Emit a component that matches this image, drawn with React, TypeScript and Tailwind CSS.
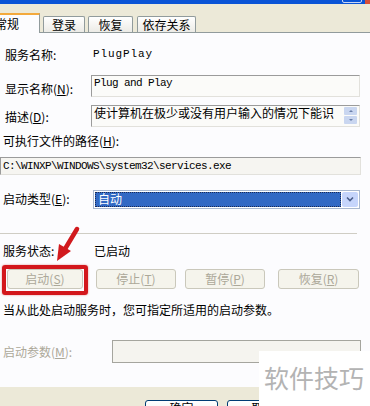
import React from "react";

const cjk = { fontFamily: '"Noto Sans CJK SC", "Noto Sans", sans-serif' };
const mono = { fontFamily: '"Liberation Mono", "DejaVu Sans Mono", monospace' };

function Tab({ label, active }: { label: string; active?: boolean }) {
  if (active) {
    return (
      <div className="relative -ml-[10px] flex h-[20px] w-[50px] items-center bg-[#fcfcfe] pl-[5px] text-[12px] text-black border-t-[2px] border-[#f3a93c] border-r border-r-[#919b9c] z-10 -mb-px">
        <span className="leading-none">{label}</span>
      </div>
    );
  }
  return (
    <div className="flex h-[16px] items-center justify-center border border-b-0 border-[#919b9c] bg-gradient-to-b from-[#ffffff] to-[#ecebe6] px-[5px] text-[12px] leading-none text-black rounded-t-[2px]">
      {label}
    </div>
  );
}

function DisabledBtn({ children, w }: { children: React.ReactNode; w: string }) {
  return (
    <div className={`flex h-[20px] ${w} items-center justify-center rounded-[3px] border border-[#cac8bb] bg-[#f5f4ec] text-[12px] text-[#aca899]`}>
      {children}
    </div>
  );
}

function U({ c }: { c: string }) {
  return <span className="underline underline-offset-1">{c}</span>;
}

export default function App() {
  return (
    <div className="relative h-[406px] w-[370px] overflow-hidden bg-[#ece9d8]" style={cjk}>
      {/* title bar strip */}
      <div className="relative h-[4px] bg-[#0a54d6]">
        <div className="absolute left-[342px] top-[-3px] h-[6px] w-[20px] rounded-[2px] border border-[#c9d6f5]" />
        <div className="absolute left-[365px] top-0 h-[4px] w-[5px] bg-[#d7503a]" />
      </div>
      {/* tabs */}
      <div className="flex h-[28px] items-end gap-[3px]">
        <Tab label="常规" active />
        <div className="flex items-end gap-[3px]">
          <div className="w-[42px]"><div className="flex h-[16px] items-center justify-center border border-b-0 border-[#919b9c] bg-gradient-to-b from-[#ffffff] to-[#ecebe6] text-[12px] leading-none rounded-t-[2px]">登录</div></div>
          <div className="w-[45px]"><div className="flex h-[16px] items-center justify-center border border-b-0 border-[#919b9c] bg-gradient-to-b from-[#ffffff] to-[#ecebe6] text-[12px] leading-none rounded-t-[2px]">恢复</div></div>
          <div className="w-[59px] ml-[1px]"><div className="flex h-[16px] items-center justify-center border border-b-0 border-[#919b9c] bg-gradient-to-b from-[#ffffff] to-[#ecebe6] text-[12px] leading-none rounded-t-[2px]">依存关系</div></div>
        </div>
      </div>
      {/* panel */}
      <div className="flex h-[355px] flex-col border-t border-[#919b9c] bg-[#fcfcfe] pt-[12px] text-[12px] text-black">
        {/* 服务名称 */}
        <div className="flex h-[19px] items-center">
          <div className="w-[93px] pl-[5px]">服务名称:</div>
          <div className="text-[11px] tracking-[0.9px]" style={mono}>PlugPlay</div>
        </div>
        {/* 显示名称 */}
        <div className="mt-[11px] flex h-[22px] items-start">
          <div className="w-[91px] pl-[5px] pt-[5px]">显示名称(<U c="N" />):</div>
          <div className="h-[22px] w-[269px] border border-t-[#9b9b9b] border-l-[#9b9b9b] border-r-[#e2e1dc] border-b-[#e2e1dc] bg-[#fbfbf9] pl-[2px] pt-[1px] text-[11px] leading-[13px] tracking-[-0.6px]" style={mono}>
            Plug and Play
          </div>
        </div>
        {/* 描述 */}
        <div className="mt-[8px] flex h-[22px] items-start">
          <div className="w-[91px] pl-[5px] pt-[3px]">描述(<U c="D" />):</div>
          <div className="relative h-[22px] w-[269px] border border-t-[#9b9b9b] border-l-[#9b9b9b] border-r-[#e2e1dc] border-b-[#e2e1dc] bg-[#fbfbf9] pl-[2px] text-[12px] leading-[14px]">
            使计算机在极少或没有用户输入的情况下能识
            <div className="absolute right-[2px] top-[1px] flex flex-col gap-px">
              <div className="flex h-[8px] w-[13px] items-center justify-center rounded-[1px] bg-[#c9d6f0]">
                <div className="h-0 w-0 border-x-[2px] border-b-[2px] border-x-transparent border-b-[#6b7fa8]" />
              </div>
              <div className="flex h-[8px] w-[13px] items-center justify-center rounded-[1px] bg-[#c9d6f0]">
                <div className="h-0 w-0 border-x-[2px] border-t-[2px] border-x-transparent border-t-[#6b7fa8]" />
              </div>
            </div>
          </div>
        </div>
        {/* 可执行文件的路径 */}
        <div className="mt-[6px] flex h-[16px] items-center pl-[3px]">可执行文件的路径(<U c="H" />):</div>
        {/* path */}
        <div className="mt-[8px] flex h-[18px] w-[361px] items-center border border-t-[#9b9b9b] border-l-[#9b9b9b] border-r-[#e2e1dc] border-b-[#e2e1dc] bg-[#f6f5f1] pl-[2px] text-[11px] tracking-[-0.6px]" style={mono}>
          C:\WINXP\WINDOWS\system32\services.exe
        </div>
        {/* 启动类型 */}
        <div className="mt-[15px] flex h-[18px] items-center">
          <div className="w-[93px] pl-[3px]">启动类型(<U c="E" />):</div>
          <div className="flex h-[19px] w-[267px] items-center border border-[#a9b8cf] bg-white p-[1px]">
            <div className="flex h-full flex-1 items-center border border-dotted border-[#1a2a55] bg-[#3269c4] pl-[2px] text-[12px] text-white">自动</div>
            <div className="ml-[1px] flex h-full w-[16px] items-center justify-center rounded-[2px] bg-[#c6d5fb]">
              <svg width="8" height="6" viewBox="0 0 8 6"><path d="M1 1.5 L4 4.5 L7 1.5" stroke="#4b5f8c" strokeWidth="1.6" fill="none" /></svg>
            </div>
          </div>
        </div>
        {/* separator */}
        <div className="mt-[25px] h-px w-[357px] bg-[#cfcdc4]" />
        {/* 服务状态 */}
        <div className="mt-[9px] flex h-[16px] items-center">
          <div className="w-[94px] pl-[3px]">服务状态:</div>
          <div>已启动</div>
        </div>
        {/* buttons */}
        <div className="relative mt-[10px] flex h-[20px] items-center pl-[7px]">
          <DisabledBtn w="w-[76px]">启动(<U c="S" />)</DisabledBtn>
          <div className="ml-[13px]"><DisabledBtn w="w-[80px]">停止(<U c="T" />)</DisabledBtn></div>
          <div className="ml-[9px]"><DisabledBtn w="w-[80px]">暂停(<U c="P" />)</DisabledBtn></div>
          <div className="ml-[13px]"><DisabledBtn w="w-[81px]">恢复(<U c="R" />)</DisabledBtn></div>
          <div className="absolute left-[2px] top-[-4px] h-[30px] w-[86px] rounded-[3px] border-[4px] border-[#d3171c] shadow-[0_0_2px_rgba(200,0,0,0.5)]" />
        </div>
        {/* hint */}
        <div className="mt-[13px] flex h-[16px] items-center pl-[3px]">当从此处启动服务时，您可指定所适用的启动参数。</div>
        {/* 启动参数 */}
        <div className="mt-[22px] flex h-[23px] items-center">
          <div className="w-[112px] pl-[3px] text-[#aca899]">启动参数(<U c="M" />):</div>
          <div className="h-[23px] w-[249px] border border-[#a5a59e] bg-[#f5f4ef]" />
        </div>
      </div>
      {/* bottom buttons */}
      <div className="flex pl-[145px] pt-[13px] gap-[9px]">
        <div className="flex h-[22px] w-[73px] justify-center rounded-[3px] border border-[#003c74] bg-gradient-to-b from-white to-[#ecebe6] pt-[1px] text-[12px] leading-[12px]">确定</div>
        <div className="flex h-[22px] w-[73px] justify-center rounded-[3px] border border-[#003c74] bg-gradient-to-b from-white to-[#ecebe6] pt-[1px] text-[12px] leading-[12px]">取消</div>
      </div>
      {/* red arrow */}
      <svg className="absolute left-0 top-0" width="370" height="406" viewBox="0 0 370 406">
        <path d="M77 229 L65 249" stroke="#d11a1e" strokeWidth="4.5" strokeLinecap="round" />
        <path d="M57 261 L59 244 L71 251 Z" fill="#d11a1e" />
      </svg>
      {/* watermark */}
      <div className="absolute left-[259px] top-[351px] flex h-[55px] w-[111px] items-start bg-white pl-[5px] pt-[12px] text-[25px] leading-[28px] text-[#b3b3b3]">
        软件技巧
      </div>
    </div>
  );
}
